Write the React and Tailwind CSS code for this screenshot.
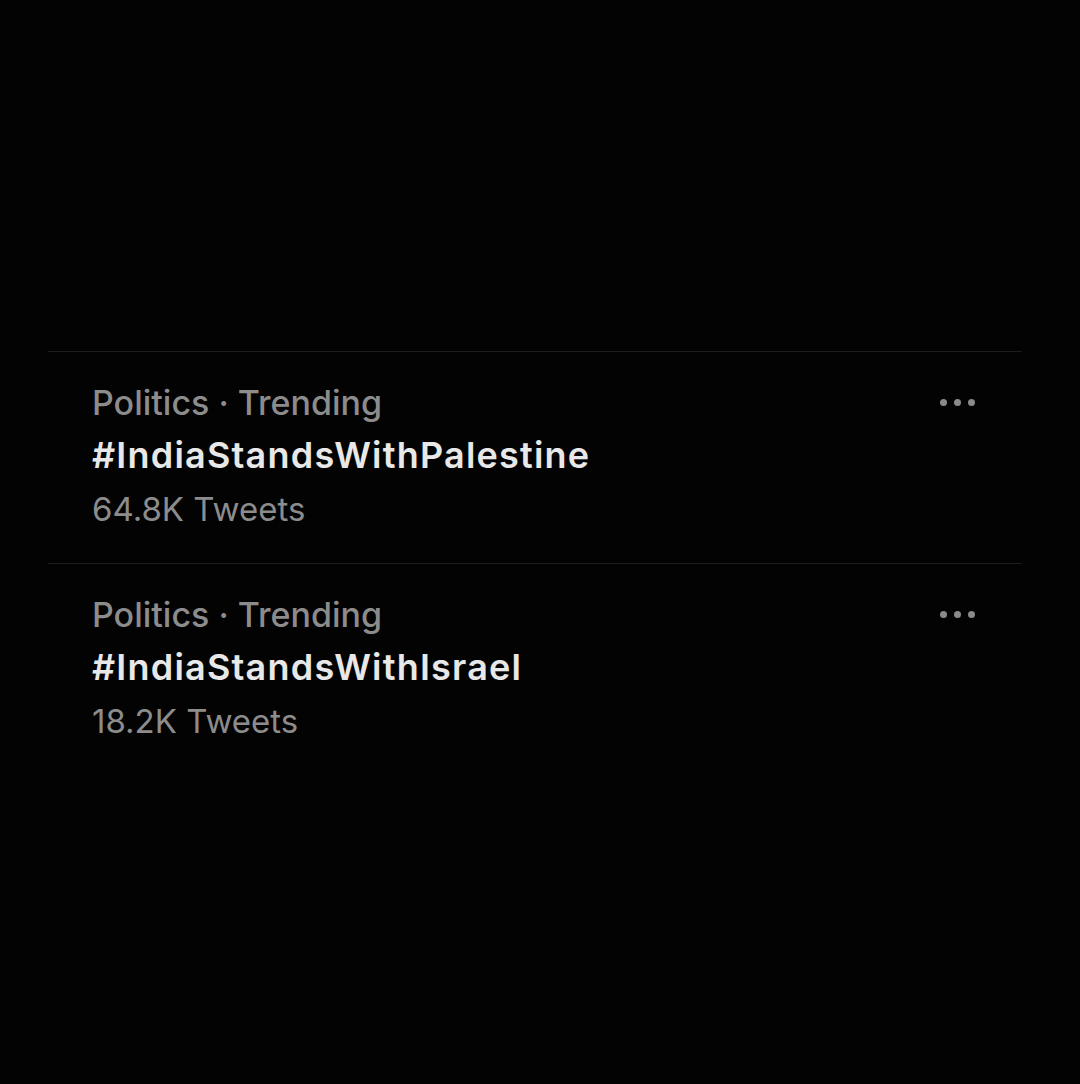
import React from "react";

const TRENDS = [
  { topic: "Politics · Trending", tag: "#IndiaStandsWithPalestine", count: "64.8K Tweets" },
  { topic: "Politics · Trending", tag: "#IndiaStandsWithIsrael", count: "18.2K Tweets" },
];

function MoreDots() {
  return (
    <div className="flex items-center gap-[7px] h-[53px]">
      <span className="w-[7px] h-[7px] rounded-full bg-[#8a8a8a]" />
      <span className="w-[7px] h-[7px] rounded-full bg-[#8a8a8a]" />
      <span className="w-[7px] h-[7px] rounded-full bg-[#8a8a8a]" />
    </div>
  );
}

export default function App() {
  return (
    <div className="w-[1080px] h-[1084px] bg-[#030303] pt-[351px] font-['Inter',sans-serif]">
      <div className="ml-[48px] w-[974px]">
        {TRENDS.map((t, i) => (
          <div key={i} className="border-t border-[#1c1c1c] h-[212px]">
            <div className="flex justify-between items-start pl-[44px] pr-[47px] pt-[24px]">
              <div className="flex flex-col">
                <div className="text-[34px] leading-[53px] text-[#8c8c8c] font-medium">{t.topic}</div>
                <div className="text-[36px] leading-[53px] text-[#e8e8e8] font-semibold tracking-[1.2px]">{t.tag}</div>
                <div className="text-[33px] leading-[54px] text-[#8c8c8c]">{t.count}</div>
              </div>
              <MoreDots />
            </div>
          </div>
        ))}
      </div>
    </div>
  );
}
